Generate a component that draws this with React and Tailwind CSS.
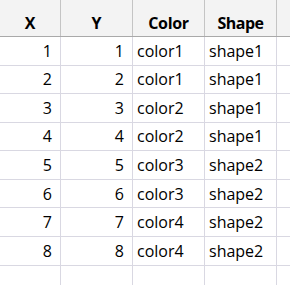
const rows = [
  [1, 1, "color1", "shape1"],
  [2, 2, "color1", "shape1"],
  [3, 3, "color2", "shape1"],
  [4, 4, "color2", "shape1"],
  [5, 5, "color3", "shape2"],
  [6, 6, "color3", "shape2"],
  [7, 7, "color4", "shape2"],
  [8, 8, "color4", "shape2"],
];

export default function App() {
  const font = { fontFamily: '"Segoe UI", "Open Sans", "Noto Sans", sans-serif' };
  return (
    <div className="w-[290px] h-[285px] overflow-hidden bg-white text-black" style={font}>
      <div className="flex h-[37px] bg-[#f3f3f3] border-b border-[#a9a9a9] font-bold text-[16px]">
        <div className="w-[61px] shrink-0 border-r border-[#c4c4c4] flex items-center justify-center pt-[10px]">X</div>
        <div className="w-[72px] shrink-0 border-r border-[#c4c4c4] flex items-center justify-center pt-[10px]">Y</div>
        <div className="w-[72px] shrink-0 border-r border-[#c4c4c4] flex items-center justify-center pt-[10px] tracking-[-0.3px]">Color</div>
        <div className="w-[72px] shrink-0 border-r border-[#c4c4c4] flex items-center justify-center pt-[10px] tracking-[-0.5px]">Shape</div>
        <div className="flex-1"></div>
      </div>
      {rows.map((r, i) => (
        <div key={i} className="flex h-[28.57px] border-b border-[#d9d8e2] text-[16px]">
          <div className="w-[61px] shrink-0 border-r border-[#d9d8e2] flex items-center justify-end pr-[8px]">{r[0]}</div>
          <div className="w-[72px] shrink-0 border-r border-[#d9d8e2] flex items-center justify-end pr-[8px]">{r[1]}</div>
          <div className="w-[72px] shrink-0 border-r border-[#d9d8e2] flex items-center pl-[4px]">{r[2]}</div>
          <div className="w-[72px] shrink-0 border-r border-[#d9d8e2] flex items-center pl-[4px]">{r[3]}</div>
          <div className="flex-1"></div>
        </div>
      ))}
      <div className="flex h-[30px] text-[16px]">
        <div className="w-[61px] shrink-0 border-r border-[#d9d8e2]"></div>
        <div className="w-[72px] shrink-0 border-r border-[#d9d8e2]"></div>
        <div className="w-[72px] shrink-0 border-r border-[#d9d8e2]"></div>
        <div className="w-[72px] shrink-0 border-r border-[#d9d8e2]"></div>
        <div className="flex-1"></div>
      </div>
    </div>
  );
}
